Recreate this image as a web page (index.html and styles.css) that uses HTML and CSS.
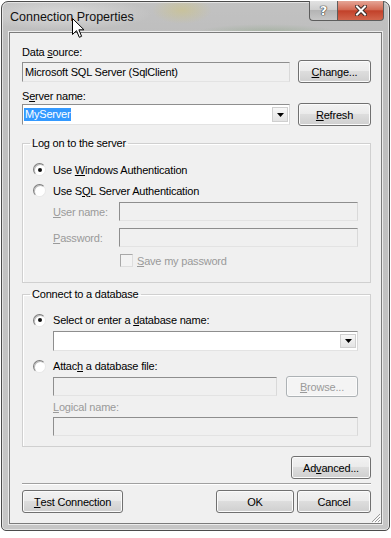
FILE: index.html
```html
<!DOCTYPE html>
<html>
  <head>
    <meta charset="UTF-8" />
    <title>Connection Properties</title>
    <link rel="stylesheet" href="styles.css">
  </head>

  <body>
    <div class="window">
      <div class="titlebar">
        <span class="caption">Connection Properties</span>
        <div class="caption-btns">
          <span class="cbtn help">?</span>
          <span class="cbtn close">
            <svg width="12" height="11" viewBox="0 0 12 11">
              <path d="M2 1.5 L10 9.5 M10 1.5 L2 9.5" stroke="#3b2a26" stroke-width="4" stroke-linecap="square" />
              <path d="M2 1.5 L10 9.5 M10 1.5 L2 9.5" stroke="#fff" stroke-width="2" stroke-linecap="square" />
            </svg>
          </span>
        </div>
      </div>

      <div class="client">
        <div class="label first">Data <u>s</u>ource:</div>
        <div class="row">
          <div class="box readonly">Microsoft SQL Server (SqlClient)</div>
          <div class="btn side"><u>C</u>hange...</div>
        </div>

        <div class="label second">S<u>e</u>rver name:</div>
        <div class="row">
          <div class="box combo">
            <span class="selected">MyServer</span>
            <span class="drop"><svg width="7" height="4" viewBox="0 0 7 4"><path d="M0 0 H7 L3.5 4 Z" fill="#000" /></svg></span>
          </div>
          <div class="btn side"><u>R</u>efresh</div>
        </div>

        <fieldset class="group logon">
          <legend>Log on to the server</legend>
          <div class="option">
            <span class="radio checked"></span>
            <span>Use <u>W</u>indows Authentication</span>
          </div>
          <div class="option">
            <span class="radio"></span>
            <span>Use S<u>Q</u>L Server Authentication</span>
          </div>
          <div class="cred first-cred">
            <span class="cred-label disabled"><u>U</u>ser name:</span>
            <div class="box off"></div>
          </div>
          <div class="cred">
            <span class="cred-label disabled"><u>P</u>assword:</span>
            <div class="box off"></div>
          </div>
          <div class="save disabled">
            <span class="check"></span>
            <span><u>S</u>ave my password</span>
          </div>
        </fieldset>

        <fieldset class="group database">
          <legend>Connect to a database</legend>
          <div class="option short">
            <span class="radio checked"></span>
            <span>Select or enter a <u>d</u>atabase name:</span>
          </div>
          <div class="box combo wide">
            <span class="drop"><svg width="7" height="4" viewBox="0 0 7 4"><path d="M0 0 H7 L3.5 4 Z" fill="#000" /></svg></span>
          </div>
          <div class="option short attach">
            <span class="radio"></span>
            <span>Attac<u>h</u> a database file:</span>
          </div>
          <div class="file-row">
            <div class="box off"></div>
            <div class="btn browse"><u>B</u>rowse...</div>
          </div>
          <div class="label logical disabled"><u>L</u>ogical name:</div>
          <div class="box off indent logical-box"></div>
        </fieldset>

        <div class="btn advanced">Ad<u>v</u>anced...</div>
        <div class="separator"></div>

        <div class="footer">
          <div class="btn test"><u>T</u>est Connection</div>
          <div class="btn ok">OK</div>
          <div class="btn cancel">Cancel</div>
        </div>

        <svg class="grip" width="10" height="10" viewBox="0 0 10 10">
          <path d="M9 1 L1 9 M9 4 L4 9 M9 7 L7 9" stroke="#9a9a9a" stroke-width="1" />
          <path d="M10 2 L2 10 M10 5 L5 10 M10 8 L8 10" stroke="#fff" stroke-width="1" />
        </svg>
      </div>

      <svg class="cursor" width="13" height="21" viewBox="0 0 13 21">
        <path d="M0.5 0.5 V16.5 L4.5 12.7 L7.3 19.3 L9.6 18.3 L6.9 11.8 H12 Z" fill="#fff" stroke="#000" stroke-width="1" stroke-linejoin="miter" />
      </svg>
    </div>
  </body>
</html>
```

FILE: styles.css
```css
html,
body {
  margin: 0;
  background: #fff;
}

body {
  font-family: 'Liberation Sans', Arial, sans-serif;
  font-size: 11px;
  letter-spacing: -0.2px;
  color: #000;
}

u {
  text-decoration: underline;
  text-underline-offset: 1px;
}

.window {
  position: relative;
  width: 373px;
  height: 522px;
  margin: 1px 0 0 1px;
  padding: 0 7px 6px 7px;
  border: 1px solid #4b4b4b;
  border-radius: 7px 7px 5px 5px;
  background:
    radial-gradient(ellipse 30px 14px at 180px 8px, rgba(214, 196, 86, 0.35), transparent),
    radial-gradient(ellipse 70px 8px at 265px 30px, rgba(110, 150, 100, 0.3), transparent),
    radial-gradient(ellipse 90px 16px at 60px 12px, rgba(235, 235, 235, 0.6), transparent),
    linear-gradient(#c2c2c2, #bdbdbd 40px, #c6c6c6);
  box-shadow: inset 0 0 0 1px rgba(255, 255, 255, 0.55);
}

.titlebar {
  display: flex;
  height: 30px;
}

.caption {
  padding: 7px 0 0 1px;
  font-size: 12.5px;
  letter-spacing: 0;
  line-height: 16px;
  color: #111;
}

.caption-btns {
  display: flex;
  margin: -1px -2px 0 auto;
  height: 20px;
}

.cbtn {
  display: flex;
  justify-content: center;
  align-items: center;
  height: 19px;
  border: 1px solid #5d5d5d;
  border-top: none;
}

.help {
  width: 27px;
  border-right: none;
  border-radius: 0 0 0 4px;
  background: linear-gradient(#e2e2e2, #cfcfcf 45%, #b4b4b4 50%, #c6c6c6);
  font-family: 'DejaVu Sans', sans-serif;
  font-weight: bold;
  font-size: 13px;
  color: #fff;
  text-shadow: 0 0 1px #333, 0 0 1px #333, 0 0 1px #333;
}

.close {
  width: 45px;
  border-radius: 0 0 4px 0;
  background: linear-gradient(#e5a596, #d36b55 45%, #c2412a 52%, #d2654c);
}

.client {
  position: relative;
  display: flex;
  flex-direction: column;
  height: 490px;
  padding: 0 10px 0 12px;
  border: 1px solid #7b7b7b;
  background: #f0f0f0;
  box-shadow: 0 0 0 1px #ececec;
}

.label {
  line-height: 13px;
}

.label.first {
  margin-top: 12px;
  line-height: 14px;
}

.label.second {
  margin-top: 7px;
}

.row {
  display: flex;
  align-items: center;
  gap: 8px;
  height: 23px;
}

.label.first + .row {
  margin-top: 1px;
}

.box {
  position: relative;
  box-sizing: border-box;
  height: 20px;
  border: 1px solid;
  border-color: #8e8e8e #d9d9d9 #e3e3e3 #8e8e8e;
  background: #fff;
}

.row .box {
  flex: 1;
}

.readonly {
  padding: 2px 0 0 2px;
  line-height: 14px;
  background: #f0f0f0;
}

.off {
  height: 19px;
  background: #f0f0f0;
}

.combo {
  height: 21px;
}

.selected {
  display: inline-block;
  margin: 3px 0 0 1px;
  padding: 0 1px;
  line-height: 13px;
  color: #fff;
  background: #3399ff;
}

.drop {
  position: absolute;
  top: 2px;
  right: 1px;
  bottom: 2px;
  width: 14px;
  display: flex;
  justify-content: center;
  align-items: center;
  border: 1px solid #cfcfcf;
  background: linear-gradient(#f7f7f7, #e4e4e4);
}

.btn {
  box-sizing: border-box;
  display: flex;
  justify-content: center;
  align-items: center;
  height: 23px;
  border: 1px solid #707070;
  border-radius: 3px;
  background: linear-gradient(#f2f2f2, #ebebeb 45%, #dddddd 50%, #cfcfcf);
  box-shadow: inset 0 0 0 1px #fbfbfb;
}

.btn.side {
  width: 73px;
}

.group {
  margin: 0;
  padding: 9px 12px 0 10px;
  border: 1px solid #d0d0d0;
  box-shadow: inset 1px 1px 0 #fff;
}

.group legend {
  margin-left: -3px;
  padding: 0 2px;
  line-height: 14px;
}

.logon {
  margin-top: 10px;
  padding-bottom: 15px;
}

.database {
  margin-top: 4px;
  padding-bottom: 10px;
}

.option {
  display: flex;
  align-items: center;
  gap: 7px;
  height: 21px;
}

.option.short {
  height: 20px;
}

.option.attach {
  margin-top: 5px;
}

.radio {
  box-sizing: border-box;
  display: flex;
  justify-content: center;
  align-items: center;
  width: 13px;
  height: 13px;
  border: 1px solid;
  border-color: #7c7c7c #e8e8e8 #e8e8e8 #7c7c7c;
  border-radius: 50%;
  background: #fff;
  box-shadow: inset 1px 1px 0 #bdbdbd;
}

.radio.checked::after {
  content: '';
  width: 4px;
  height: 4px;
  border-radius: 50%;
  background: #111;
}

.disabled {
  color: #9a9a9a;
}

.cred {
  display: flex;
  align-items: center;
  margin: 7px 0 0 20px;
}

.cred.first-cred {
  margin-top: 1px;
}

.cred-label {
  width: 66px;
}

.cred .box {
  flex: 1;
}

.save {
  display: flex;
  align-items: center;
  gap: 4px;
  height: 13px;
  margin: 7px 0 0 87px;
}

.check {
  box-sizing: border-box;
  width: 13px;
  height: 13px;
  border: 1px solid;
  border-color: #a8a8a8 #dedede #dedede #a8a8a8;
  background: #f3f3f3;
}

.combo.wide {
  height: 20px;
  margin: 1px 0 0 20px;
}

.file-row {
  display: flex;
  align-items: center;
  gap: 9px;
  height: 21px;
  margin-left: 20px;
}

.file-row .box {
  flex: 1;
}

.btn.browse {
  width: 72px;
  height: 21px;
  border-color: #adb2b5;
  color: #9a9a9a;
  background: #f4f4f4;
}

.label.logical {
  margin: 4px 0 0 20px;
}

.indent {
  margin-left: 20px;
}

.logical-box {
  margin-top: 3px;
}

.btn.advanced {
  align-self: flex-end;
  width: 80px;
  margin-top: 9px;
}

.separator {
  height: 1px;
  margin-top: 4px;
  background: #a0a0a0;
  box-shadow: 0 1px 0 #fff;
}

.footer {
  display: flex;
  gap: 3px;
  margin-top: 6px;
}

.btn.test {
  width: 101px;
}

.btn.ok {
  width: 78px;
  margin-left: auto;
}

.btn.cancel {
  width: 74px;
}

.grip {
  position: absolute;
  right: 0;
  bottom: 0;
}

.cursor {
  position: absolute;
  left: 70px;
  top: 16px;
}
```
